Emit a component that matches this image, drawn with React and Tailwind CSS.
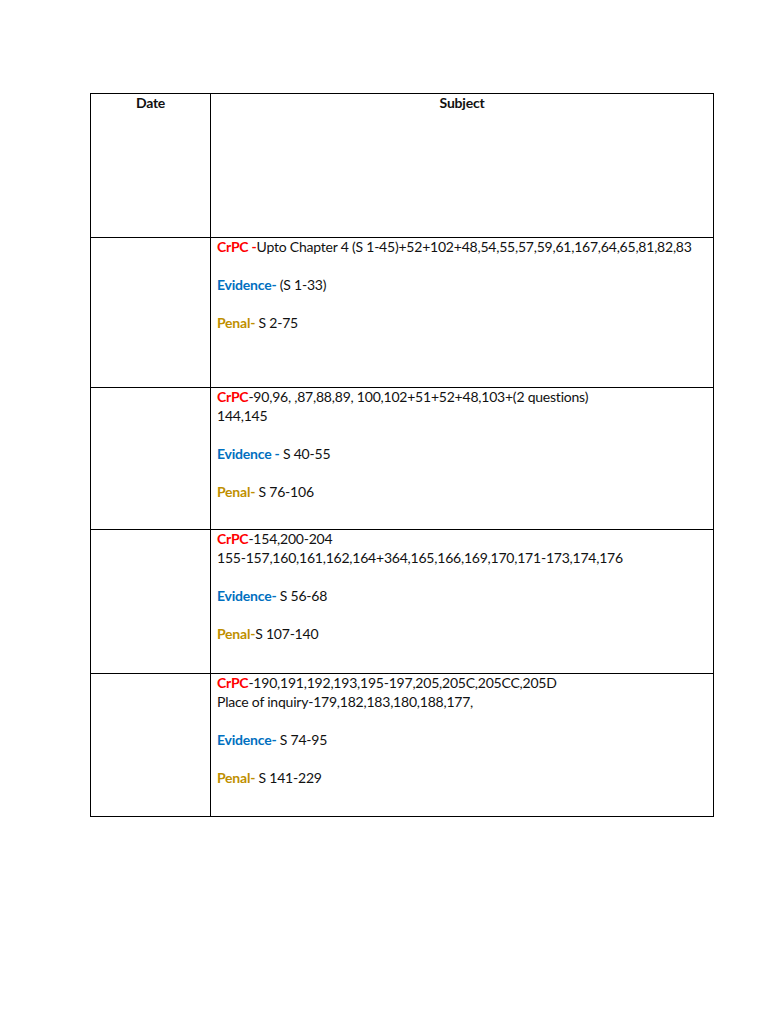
import React from "react";

const Red = ({ children }) => <span className="font-bold text-[#ff0000]">{children}</span>;
const Blue = ({ children }) => <span className="font-bold text-[#0070c0]">{children}</span>;
const Gold = ({ children }) => <span className="font-bold text-[#bf8f00]">{children}</span>;
const Blank = () => <div className="h-[19px]" />;

const rows = [
  {
    h: "h-[150px]",
    content: (
      <>
        <div><Red>CrPC -</Red>Upto Chapter 4 (S 1-45)+52+102+48,54,55,57,59,61,167,64,65,81,82,83</div>
        <Blank />
        <div><Blue>Evidence-</Blue> (S 1-33)</div>
        <Blank />
        <div><Gold>Penal-</Gold> S 2-75</div>
      </>
    ),
  },
  {
    h: "h-[142px]",
    content: (
      <>
        <div><Red>CrPC</Red>-90,96, ,87,88,89, 100,102+51+52+48,103+(2 questions)</div>
        <div>144,145</div>
        <Blank />
        <div><Blue>Evidence -</Blue> S 40-55</div>
        <Blank />
        <div><Gold>Penal-</Gold> S 76-106</div>
      </>
    ),
  },
  {
    h: "h-[144px]",
    content: (
      <>
        <div><Red>CrPC</Red>-154,200-204</div>
        <div>155-157,160,161,162,164+364,165,166,169,170,171-173,174,176</div>
        <Blank />
        <div><Blue>Evidence-</Blue> S 56-68</div>
        <Blank />
        <div><Gold>Penal-</Gold>S 107-140</div>
      </>
    ),
  },
  {
    h: "h-[142px]",
    content: (
      <>
        <div><Red>CrPC</Red>-190,191,192,193,195-197,205,205C,205CC,205D</div>
        <div>Place of inquiry-179,182,183,180,188,177,</div>
        <Blank />
        <div><Blue>Evidence-</Blue> S 74-95</div>
        <Blank />
        <div><Gold>Penal-</Gold> S 141-229</div>
      </>
    ),
  },
];

export default function App() {
  return (
    <div
      className="w-[768px] h-[1024px] bg-white text-[14px] leading-[19px] tracking-[-0.22px] text-[#111]"
      style={{ fontFamily: "Lato, 'Open Sans', sans-serif" }}
    >
      <div className="pt-[93px] pl-[90px]">
        <div className="w-[624px] border border-black">
          <div className="flex h-[144px] border-b border-black">
            <div className="w-[120px] shrink-0 border-r border-black text-center font-bold -mt-px">Date</div>
            <div className="flex-1 text-center font-bold -mt-px">Subject</div>
          </div>
          {rows.map((r, i) => (
            <div
              key={i}
              className={`flex ${r.h} ${i < rows.length - 1 ? "border-b border-black" : ""}`}
            >
              <div className="w-[120px] shrink-0 border-r border-black" />
              <div className="flex-1 pl-[6px] -mt-px">{r.content}</div>
            </div>
          ))}
        </div>
      </div>
    </div>
  );
}
